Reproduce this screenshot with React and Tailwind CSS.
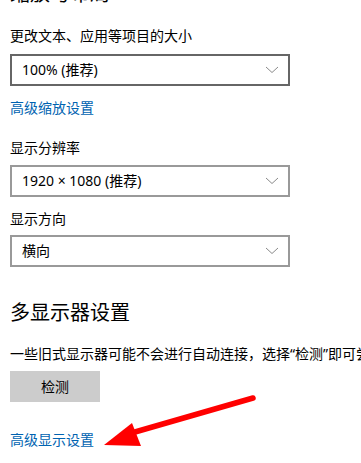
import React from "react";

const font = { fontFamily: '"Noto Sans", "Noto Sans CJK SC", sans-serif' };

function Chevron() {
  return (
    <svg width="14" height="8" viewBox="0 0 14 8" className="shrink-0">
      <path d="M1 1 L7 6.5 L13 1" fill="none" stroke="#8a8a8a" strokeWidth="1" />
    </svg>
  );
}

function Select({ value, dark }) {
  return (
    <div
      className={`w-[280px] h-[32px] border-2 ${dark ? "border-[#666666]" : "border-[#999999]"} bg-white flex items-center justify-between pl-[10px] pr-[9px]`}
    >
      <span className="text-[14px] leading-[20px] text-black">{value}</span>
      <Chevron />
    </div>
  );
}

export default function App() {
  return (
    <div
      className="relative w-[361px] h-[463px] overflow-hidden bg-white pl-[10px] text-black"
      style={font}
    >
      <div className="mt-[-20px] text-[20px] leading-[28px]">缩放与布局</div>
      <div className="mt-[18px] text-[14px] leading-[20px]">更改文本、应用等项目的大小</div>
      <div className="mt-[8px]">
        <Select value="100% (推荐)" dark />
      </div>
      <div className="mt-[12px] text-[14px] leading-[20px] text-[#0063b1]">高级缩放设置</div>
      <div className="mt-[20px] text-[14px] leading-[20px]">显示分辨率</div>
      <div className="mt-[7px]">
        <Select value="1920 × 1080 (推荐)" />
      </div>
      <div className="mt-[12px] text-[14px] leading-[20px]">显示方向</div>
      <div className="mt-[6px]">
        <Select value="横向" />
      </div>
      <div className="mt-[32px] text-[20px] leading-[28px]">多显示器设置</div>
      <div className="mt-[17px] text-[14px] leading-[20px] whitespace-nowrap">
        一些旧式显示器可能不会进行自动连接，选择“检测”即可尝试连接。
      </div>
      <button className="mt-[7px] w-[90px] h-[31px] bg-[#cccccc] text-[14px] leading-[20px] text-black flex items-center justify-center">
        检测
      </button>
      <div className="mt-[28px] text-[14px] leading-[20px] text-[#0063b1]">高级显示设置</div>

      <svg
        className="absolute left-0 top-0 pointer-events-none"
        width="361"
        height="463"
        viewBox="0 0 361 463"
      >
        <line
          x1="253"
          y1="398"
          x2="128"
          y2="434"
          stroke="#ff0000"
          strokeWidth="5.5"
          strokeLinecap="round"
        />
        <polygon points="104,445 132,423 141,446" fill="#ff0000" />
      </svg>
    </div>
  );
}
